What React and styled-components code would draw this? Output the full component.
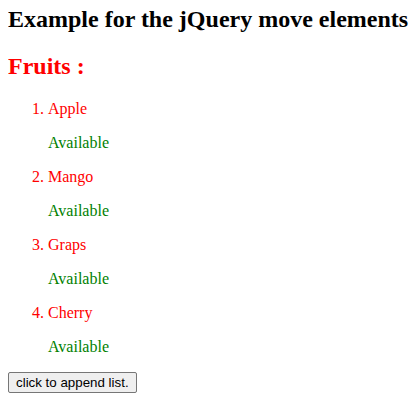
import React from "react";
import styled, { createGlobalStyle } from "styled-components";

const GlobalStyle = createGlobalStyle`
  body {
    margin: 6px 8px 8px;
    background: #fff;
    font-family: "Liberation Serif", "Times New Roman", serif;
    font-size: 16px;
  }
`;

const Title = styled.h2`
  margin: 0 0 0.83em;
  font-size: 24px;
  font-weight: bold;
  color: ${(p) => p.color || "#000"};
`;

const FruitList = styled.ol`
  margin: 16px 0;
  padding-left: 40px;
`;

const Fruit = styled.li`
  color: #f00;
`;

const Status = styled.p`
  margin: 16px 0;
  color: #008000;
`;

const AppendButton = styled.button`
  display: block;
  font-family: "Liberation Sans", Arial, sans-serif;
  font-size: 13.333px;
  color: #000;
  background: #efefef;
  border: 1px solid #767676;
  border-radius: 2px;
  padding: 2px 7px;
  cursor: pointer;

  &:hover {
    background: #e5e5e5;
  }
`;

const fruits = ["Apple", "Mango", "Graps", "Cherry"];

export default function App() {
  return (
    <>
      <GlobalStyle />
      <Title>Example for the jQuery move elements</Title>
      <Title color="#f00">Fruits :</Title>
      <FruitList>
        {fruits.map((f) => (
          <Fruit key={f}>
            {f}
            <Status>Available</Status>
          </Fruit>
        ))}
      </FruitList>
      <AppendButton>click to append list.</AppendButton>
    </>
  );
}
